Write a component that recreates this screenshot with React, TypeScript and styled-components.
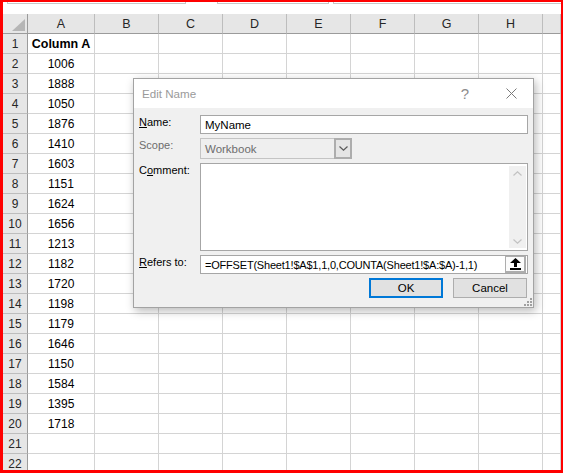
import React from "react";
import styled, { createGlobalStyle } from "styled-components";

const GlobalStyle = createGlobalStyle`
  body {
    margin: 0;
    font-family: "Liberation Sans", Arial, sans-serif;
  }
`;

const Frame = styled.div`
  position: relative;
  width: 563px;
  height: 473px;
  box-sizing: border-box;
  border-style: solid;
  border-color: #ff0000;
  border-width: 2px 2px 3px 3px;
  background: #ffffff;
  overflow: hidden;
`;

const FormulaStrip = styled.div`
  height: 12px;
  display: flex;
  align-items: flex-start;
  padding-left: 4px;
  gap: 31px;
`;

const StripBox = styled.div<{ $width: number; $gap?: number }>`
  width: ${(p) => p.$width}px;
  height: 1px;
  margin-left: ${(p) => (p.$gap ? p.$gap - 31 : 0)}px;
  border: 1px solid #c6c6c6;
  border-top: 0;
  flex-shrink: 0;
`;

const Sheet = styled.div`
  display: grid;
  grid-template-columns: 25px 67px repeat(7, 64px) 1fr;
  grid-auto-rows: 20px;
  font-size: 12px;
  color: #000;
`;

const Corner = styled.div`
  position: relative;
  background: #e6e6e6;
  border-right: 1px solid #9b9b9b;
  border-bottom: 1px solid #9b9b9b;
  box-sizing: border-box;
  svg {
    position: absolute;
    right: 2px;
    bottom: 2px;
  }
`;

const ColHeader = styled.div`
  background: #e6e6e6;
  border-right: 1px solid #bdbdbd;
  border-bottom: 1px solid #9b9b9b;
  box-sizing: border-box;
  display: flex;
  align-items: center;
  justify-content: center;
  font-size: 12.5px;
  color: #262626;
`;

const RowHeader = styled.div`
  background: #e6e6e6;
  border-right: 1px solid #9b9b9b;
  border-bottom: 1px solid #bdbdbd;
  box-sizing: border-box;
  display: flex;
  align-items: center;
  justify-content: center;
  color: #262626;
`;

const Cell = styled.div<{ $bold?: boolean }>`
  border-right: 1px solid #d4d4d4;
  border-bottom: 1px solid #d4d4d4;
  box-sizing: border-box;
  display: flex;
  align-items: center;
  justify-content: center;
  font-weight: ${(p) => (p.$bold ? 700 : 400)};
  font-size: ${(p) => (p.$bold ? "12.5px" : "12px")};
`;

const Dialog = styled.div`
  position: absolute;
  left: 130px;
  top: 76px;
  width: 401px;
  height: 230px;
  box-sizing: border-box;
  border: 1px solid #a3a3a3;
  background: #f0f0f0;
  box-shadow: 2px 3px 9px rgba(0, 0, 0, 0.28);
  display: flex;
  flex-direction: column;
  font-size: 11px;
`;

const TitleBar = styled.div`
  height: 29px;
  background: #ffffff;
  display: flex;
  align-items: center;
  padding-left: 8px;
`;

const Title = styled.div`
  flex: 1;
  color: #9a9a9a;
  font-size: 11.6px;
`;

const HelpGlyph = styled.div`
  width: 14px;
  margin-right: 33px;
  color: #8c8c8c;
  font-size: 15px;
  font-family: "Liberation Sans", Arial, sans-serif;
  text-align: center;
`;

const CloseGlyph = styled.div`
  width: 12px;
  margin-right: 16px;
  display: flex;
  align-items: center;
  justify-content: center;
`;

const Body = styled.div`
  position: relative;
  flex: 1;
  display: grid;
  grid-template-columns: 61px 1fr;
  grid-template-rows: 19px 21px 88px 19px 20px;
  row-gap: 4px;
  padding: 7px 5px 0 5px;
`;

const Label = styled.div<{ $disabled?: boolean }>`
  line-height: 14px;
  color: ${(p) => (p.$disabled ? "#6d6d6d" : "#000")};
`;

const Key = styled.span`
  text-decoration: underline;
`;

const TextField = styled.input`
  box-sizing: border-box;
  width: 100%;
  height: 100%;
  margin: 0;
  border: 1px solid #a6a6a6;
  background: #ffffff;
  padding: 0 4px;
  font-family: "Liberation Sans", Arial, sans-serif;
  font-size: 11.5px;
  color: #000;
  outline: none;
`;

const ScopeSelect = styled.div`
  box-sizing: border-box;
  width: 152px;
  height: 100%;
  border: 1px solid #c4c4c4;
  background: #efefef;
  display: flex;
  align-items: center;
  padding-left: 4px;
  color: #6d6d6d;
  font-size: 11.5px;
`;

const ScopeText = styled.div`
  flex: 1;
`;

const DropButton = styled.div`
  box-sizing: border-box;
  width: 18px;
  height: 21px;
  margin: -1px -1px -1px 0;
  border: 2px solid #adadad;
  background: #e5e5e5;
  display: flex;
  align-items: center;
  justify-content: center;
`;

const CommentBox = styled.div`
  box-sizing: border-box;
  border: 1px solid #a6a6a6;
  background: #ffffff;
  display: flex;
  justify-content: flex-end;
  padding: 2px 1px 2px 0;
`;

const ScrollTrack = styled.div`
  width: 17px;
  background: #f0f0f0;
  display: flex;
  flex-direction: column;
  justify-content: space-between;
  align-items: center;
  padding: 5px 0 4px;
`;

const RefersField = styled.div`
  box-sizing: border-box;
  border: 1px solid #a6a6a6;
  background: #ffffff;
  display: flex;
  align-items: center;
  padding-left: 4px;
  font-size: 11px;
  letter-spacing: -0.2px;
  white-space: nowrap;
`;

const RefersText = styled.div`
  flex: 1;
  overflow: hidden;
`;

const CollapseButton = styled.div`
  box-sizing: border-box;
  width: 21px;
  height: 17px;
  margin-right: 1px;
  border: 1px solid #adadad;
  border-right-width: 2px;
  border-bottom-width: 2px;
  background: #fbfbfb;
  display: flex;
  align-items: center;
  justify-content: center;
`;

const ButtonRow = styled.div`
  grid-column: 1 / span 2;
  display: flex;
  justify-content: flex-end;
  gap: 10px;
  padding-right: 1px;
`;

const DialogButton = styled.div<{ $focused?: boolean }>`
  box-sizing: border-box;
  width: 74px;
  height: 20px;
  background: #e1e1e1;
  border: ${(p) => (p.$focused ? "2px solid #0078d7" : "1px solid #adadad")};
  display: flex;
  align-items: center;
  justify-content: center;
  font-size: 11.5px;
`;

const Grip = styled.div`
  position: absolute;
  right: 1px;
  bottom: 1px;
  line-height: 0;
`;

const values = [
  1006, 1888, 1050, 1876, 1410, 1603, 1151, 1624, 1656, 1213, 1182, 1720,
  1198, 1179, 1646, 1150, 1584, 1395, 1718,
];

const letters = ["A", "B", "C", "D", "E", "F", "G", "H", ""];

const Chevron = ({ up, color }: { up?: boolean; color: string }) => (
  <svg width="9" height="5" viewBox="0 0 9 5">
    <path
      d={up ? "M0.5 4.5 L4.5 0.8 L8.5 4.5" : "M0.5 0.5 L4.5 4.2 L8.5 0.5"}
      fill="none"
      stroke={color}
      strokeWidth="1.2"
    />
  </svg>
);

export default function App() {
  const rows: React.ReactNode[] = [];
  for (let r = 1; r <= 22; r++) {
    let content: React.ReactNode = "";
    if (r === 1) content = "Column A";
    else if (r - 2 < values.length) content = values[r - 2];
    rows.push(<RowHeader key={"h" + r}>{r}</RowHeader>);
    rows.push(
      <Cell key={"a" + r} $bold={r === 1}>
        {content}
      </Cell>
    );
    for (let c = 1; c < letters.length; c++) {
      rows.push(<Cell key={r + "-" + c} />);
    }
  }

  return (
    <>
      <GlobalStyle />
      <Frame>
        <FormulaStrip>
          <StripBox $width={177} />
          <StripBox $width={110} />
          <StripBox $width={235} $gap={4} />
        </FormulaStrip>
        <Sheet>
          <Corner>
            <svg width="13" height="12" viewBox="0 0 13 12">
              <polygon points="13,0 13,12 0,12" fill="#b6b6b6" />
            </svg>
          </Corner>
          {letters.map((l, i) => (
            <ColHeader key={"c" + i}>{l}</ColHeader>
          ))}
          {rows}
        </Sheet>

        <Dialog>
          <TitleBar>
            <Title>Edit Name</Title>
            <HelpGlyph>?</HelpGlyph>
            <CloseGlyph>
              <svg width="11" height="11" viewBox="0 0 11 11">
                <path
                  d="M0.5 0.5 L10.5 10.5 M10.5 0.5 L0.5 10.5"
                  stroke="#7a7a7a"
                  strokeWidth="1"
                />
              </svg>
            </CloseGlyph>
          </TitleBar>
          <Body>
            <Label>
              <Key>N</Key>ame:
            </Label>
            <TextField readOnly value="MyName" />

            <Label $disabled>Scope:</Label>
            <ScopeSelect>
              <ScopeText>Workbook</ScopeText>
              <DropButton>
                <Chevron color="#5a5a5a" />
              </DropButton>
            </ScopeSelect>

            <Label>
              C<Key>o</Key>mment:
            </Label>
            <CommentBox>
              <ScrollTrack>
                <Chevron up color="#c2c2c2" />
                <Chevron color="#c2c2c2" />
              </ScrollTrack>
            </CommentBox>

            <Label>
              <Key>R</Key>efers to:
            </Label>
            <RefersField>
              <RefersText>=OFFSET(Sheet1!$A$1,1,0,COUNTA(Sheet1!$A:$A)-1,1)</RefersText>
              <CollapseButton>
                <svg width="11" height="12" viewBox="0 0 11 12">
                  <polygon points="5.5,0 11,5 7,5 7,9 4,9 4,5 0,5" fill="#000" />
                  <rect x="0" y="10" width="11" height="2" fill="#000" />
                </svg>
              </CollapseButton>
            </RefersField>

            <ButtonRow>
              <DialogButton $focused>OK</DialogButton>
              <DialogButton>Cancel</DialogButton>
            </ButtonRow>
            <Grip>
              <svg width="10" height="10" viewBox="0 0 10 10">
                <g fill="#a0a0a0">
                  <rect x="8" y="2" width="2" height="2" />
                  <rect x="5" y="5" width="2" height="2" />
                  <rect x="8" y="5" width="2" height="2" />
                  <rect x="2" y="8" width="2" height="2" />
                  <rect x="5" y="8" width="2" height="2" />
                  <rect x="8" y="8" width="2" height="2" />
                </g>
              </svg>
            </Grip>
          </Body>
        </Dialog>
      </Frame>
    </>
  );
}
